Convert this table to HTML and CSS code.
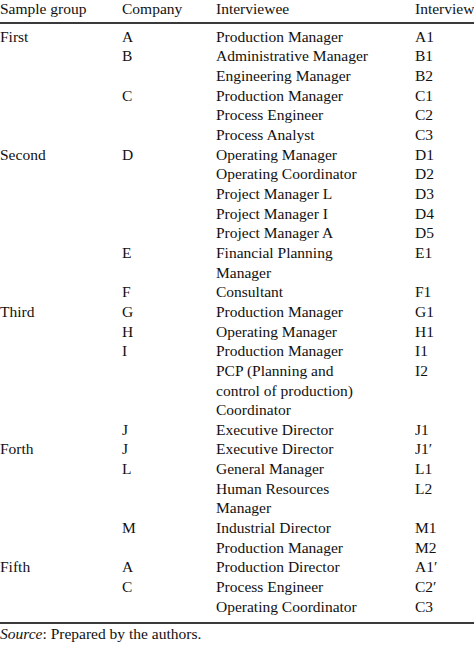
FILE: index.html
```html
<!DOCTYPE html>
<html lang="en">
<head>
<meta charset="utf-8">
<title>Sample groups and interviewees</title>
<link rel="stylesheet" href="styles.css">
</head>
<body>
<div class="wrap">
  <div class="grid head">
    <div>Sample group</div><div>Company</div><div>Interviewee</div><div>Interview</div>
  </div>
  <div class="grid body">
    <div>First</div><div>A</div><div>Production Manager</div><div>A1</div>
    <div></div><div>B</div><div>Administrative Manager</div><div>B1</div>
    <div></div><div></div><div>Engineering Manager</div><div>B2</div>
    <div></div><div>C</div><div>Production Manager</div><div>C1</div>
    <div></div><div></div><div>Process Engineer</div><div>C2</div>
    <div></div><div></div><div>Process Analyst</div><div>C3</div>
    <div>Second</div><div>D</div><div>Operating Manager</div><div>D1</div>
    <div></div><div></div><div>Operating Coordinator</div><div>D2</div>
    <div></div><div></div><div>Project Manager L</div><div>D3</div>
    <div></div><div></div><div>Project Manager I</div><div>D4</div>
    <div></div><div></div><div>Project Manager A</div><div>D5</div>
    <div></div><div>E</div><div>Financial Planning<br>Manager</div><div>E1</div>
    <div></div><div>F</div><div>Consultant</div><div>F1</div>
    <div>Third</div><div>G</div><div>Production Manager</div><div>G1</div>
    <div></div><div>H</div><div>Operating Manager</div><div>H1</div>
    <div></div><div>I</div><div>Production Manager</div><div>I1</div>
    <div></div><div></div><div>PCP (Planning and<br>control of production)<br>Coordinator</div><div>I2</div>
    <div></div><div>J</div><div>Executive Director</div><div>J1</div>
    <div>Forth</div><div>J</div><div>Executive Director</div><div>J1&#8242;</div>
    <div></div><div>L</div><div>General Manager</div><div>L1</div>
    <div></div><div></div><div>Human Resources<br>Manager</div><div>L2</div>
    <div></div><div>M</div><div>Industrial Director</div><div>M1</div>
    <div></div><div></div><div>Production Manager</div><div>M2</div>
    <div>Fifth</div><div>A</div><div>Production Director</div><div>A1&#8242;</div>
    <div></div><div>C</div><div>Process Engineer</div><div>C2&#8242;</div>
    <div></div><div></div><div>Operating Coordinator</div><div>C3</div>
  </div>
  <p class="source"><em>Source</em>: Prepared by the authors.</p>
</div>
</body>
</html>
```

FILE: styles.css
```css
html, body {
  margin: 0;
  padding: 0;
  background: #ffffff;
}
body {
  overflow: hidden;
  font-family: "Liberation Serif", "Times New Roman", serif;
  font-size: 15.5px;
  line-height: 19.66px;
  color: #111111;
}
.wrap {
  width: 474px;
}
.grid {
  display: grid;
  grid-template-columns: 122px 94px 199px 1fr;
  white-space: nowrap;
}
.head {
  line-height: 17.2px;
  padding-bottom: 4.5px;
  border-bottom: 2px solid #3a3a3a;
}
.body {
  padding-top: 3px;
  padding-bottom: 6px;
  border-bottom: 2px solid #3a3a3a;
}
.source {
  margin: 0;
}
.source em {
  font-style: italic;
}
```
